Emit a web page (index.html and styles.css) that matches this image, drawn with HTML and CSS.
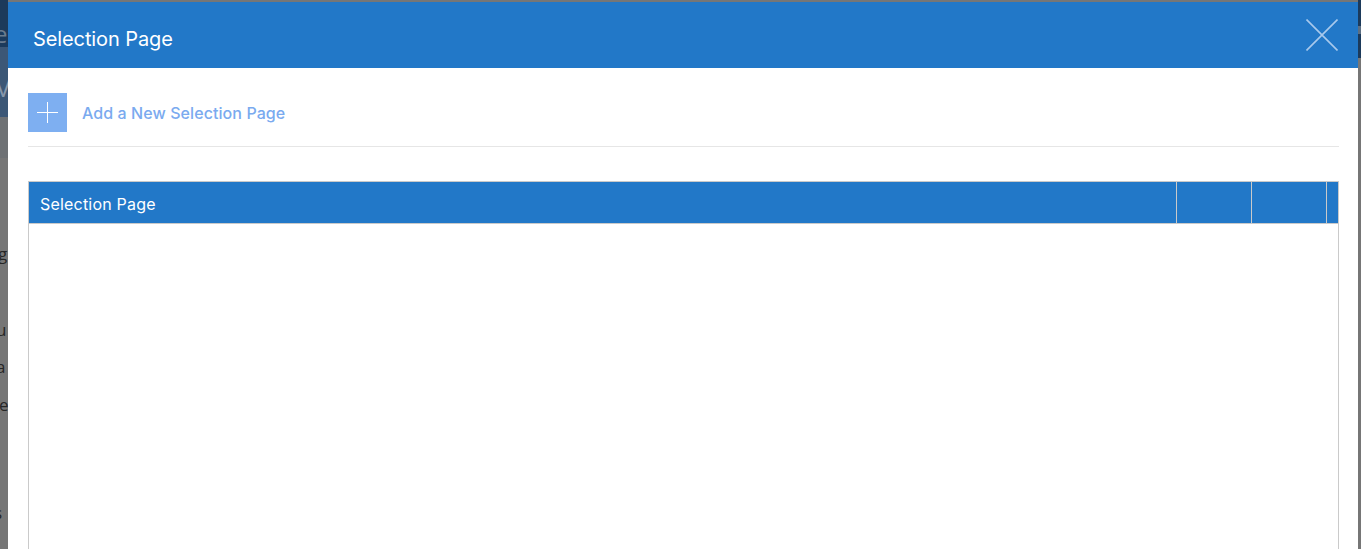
FILE: index.html
```html
<!DOCTYPE html>
<html>
<head>
<meta charset="utf-8">
<title>Selection Page</title>
<link rel="stylesheet" href="styles.css">
</head>
<body>
<div class="screen">
  <div class="bg-left">
    <div class="seg seg-navy"><span class="frag frag-light f-e">e</span></div>
    <div class="seg seg-slate"><span class="frag frag-slate f-v">V</span></div>
    <div class="seg seg-grey1"></div>
    <div class="seg seg-grey2">
      <span class="frag f-g">g</span>
      <span class="frag f-u">u</span>
      <span class="frag f-a">a</span>
      <span class="frag f-e2">e</span>
      <span class="frag f-s">s</span>
    </div>
  </div>

  <div class="modal">
    <div class="modal-header">
      <h1 class="modal-title">Selection Page</h1>
      <button class="close" aria-label="Close">
        <svg width="32" height="32" viewBox="0 0 32 32"><path d="M0.5 0.5 L31.5 31.5 M31.5 0.5 L0.5 31.5" stroke="#a8c9ec" stroke-width="1.6" fill="none"/></svg>
      </button>
    </div>
    <div class="modal-body">
      <div class="add-row">
        <span class="add-btn">
          <svg width="21" height="21" viewBox="0 0 21 21"><path d="M10.5 0 V21 M0 10.5 H21" stroke="#ffffff" stroke-width="1" fill="none"/></svg>
        </span>
        <span class="add-label">Add a New Selection Page</span>
      </div>
      <div class="divider"></div>
      <div class="table">
        <div class="thead">
          <div class="th th-main">Selection Page</div>
          <div class="th"></div>
          <div class="th"></div>
          <div class="th th-last"></div>
        </div>
        <div class="tbody"></div>
      </div>
    </div>
  </div>

  <div class="bg-right">
    <div class="r-navy1"></div>
    <div class="r-line"></div>
    <div class="r-navy2"></div>
    <div class="r-grey"></div>
  </div>
</div>
</body>
</html>
```

FILE: styles.css
```css
html, body {
  margin: 0;
  padding: 0;
}
body {
  font-family: Inter, "Noto Sans", sans-serif;
  overflow: hidden;
}
.screen {
  display: flex;
  width: 1361px;
  height: 549px;
  overflow: hidden;
  background: #767676;
}

/* background page strips */
.bg-left {
  width: 8px;
  flex: none;
  display: flex;
  flex-direction: column;
  overflow: hidden;
}
.seg {
  position: relative;
  overflow: hidden;
}
.seg-navy { height: 47px; background: #1c3a5b; }
.seg-slate { height: 70px; background: #3c5776; }
.seg-grey1 { height: 41px; background: #6e7174; }
.seg-grey2 { flex: 1; background: #767676; }
.frag {
  position: absolute;
  left: -3px;
  font-family: "Open Sans", sans-serif;
  font-size: 17px;
  line-height: 20px;
  color: #262626;
}
.frag-light { color: #6b7c8e; font-size: 24px; line-height: 24px; left: -6px; }
.frag-slate { color: #8797ab; font-size: 24px; line-height: 24px; left: -4px; }
.f-e { top: 22px; }
.f-v { top: 29px; }
.f-g { top: 86px; left: -2px; }
.f-u { top: 162px; left: -4px; }
.f-a { top: 199px; left: -4px; }
.f-e2 { top: 237px; left: -1px; }
.f-s { top: 345px; left: -6px; }

.bg-right {
  width: 3px;
  flex: none;
  display: flex;
  flex-direction: column;
}
.r-navy1 { height: 26px; background: #1c3a5b; }
.r-line { height: 8px; background: #5d6f83; }
.r-navy2 { height: 24px; background: #1c3a5b; }
.r-grey { flex: 1; background: #767676; }

/* modal */
.modal {
  flex: none;
  width: 1350px;
  margin-top: 2px;
  background: #ffffff;
  display: flex;
  flex-direction: column;
}
.modal-header {
  height: 66px;
  background: #2278c8;
  display: flex;
  align-items: center;
  justify-content: space-between;
  padding: 0 20px 0 25px;
}
.modal-title {
  margin: 8px 0 0 0;
  font-size: 20px;
  font-weight: 400;
  color: #ffffff;
  letter-spacing: -0.1px;
}
.close {
  border: 0;
  padding: 0;
  background: transparent;
  width: 32px;
  height: 32px;
  display: block;
}
.close svg { display: block; }

.modal-body {
  flex: 1;
  padding: 25px 19px 0 20px;
  display: flex;
  flex-direction: column;
}
.add-row {
  display: flex;
  align-items: center;
  gap: 15px;
  height: 39px;
}
.add-btn {
  width: 39px;
  height: 39px;
  background: #7eaff1;
  display: flex;
  align-items: center;
  justify-content: center;
}
.add-btn svg { display: block; }
.add-label {
  font-size: 16px;
  font-weight: 500;
  color: #7aaaef;
  letter-spacing: 0.08px;
}
.divider {
  margin-top: 14px;
  height: 1px;
  background: #e6e6e6;
}

.table {
  margin-top: 34px;
  flex: 1;
  display: flex;
  flex-direction: column;
  border: 1px solid #cacaca;
  border-bottom: 0;
}
.thead {
  display: grid;
  grid-template-columns: 1fr 74px 74px 11px;
  column-gap: 1px;
  background: #cacaca;
  border-bottom: 1px solid #cacaca;
  height: 41px;
}
.th {
  background: #2278c8;
  color: #ffffff;
  font-size: 16px;
  display: flex;
  align-items: center;
}
.th-main {
  padding-left: 11px;
  padding-top: 2px;
  letter-spacing: 0.2px;
}
.tbody {
  flex: 1;
  background: #ffffff;
}
```
